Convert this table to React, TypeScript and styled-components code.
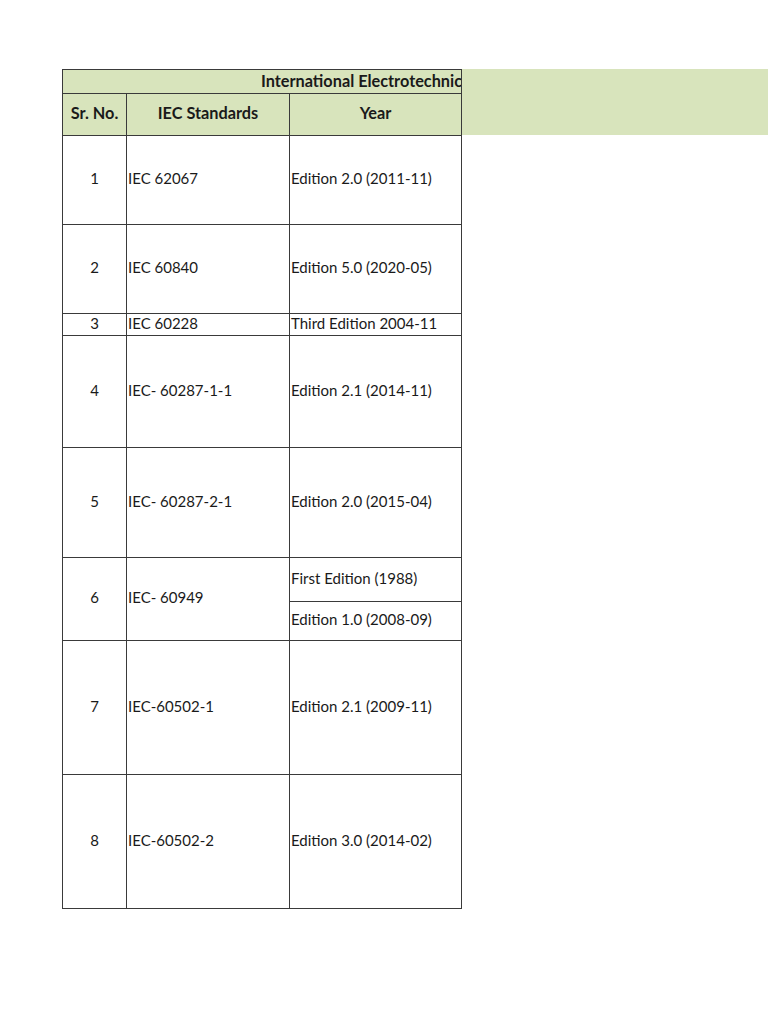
import React from 'react';
import styled, { createGlobalStyle } from 'styled-components';

const GlobalStyle = createGlobalStyle`
  html, body {
    margin: 0;
    padding: 0;
    background: #ffffff;
  }
  body {
    font-family: Lato, "Liberation Sans", sans-serif;
    font-size: 15px;
    color: #1a1a1a;
  }
`

const GREEN = '#d8e4bc'
const LINE = '#3a3a3a'

const Page = styled.div`
  padding: 69px 0 0 62px;
`

const HeadBand = styled.div`
  display: flex;
  align-items: flex-start;
`

const Filler = styled.div`
  flex: 1;
  height: 66px;
  background: ${GREEN};
`

const Grid = styled.div<{ $rows: string }>`
  display: grid;
  grid-template-columns: 64px 163px 172px;
  grid-template-rows: ${p => p.$rows};
  width: 400px;
  box-sizing: border-box;
  border-left: 1px solid ${LINE};
`

const TitleCell = styled.div`
  grid-column: 1 / span 3;
  background: ${GREEN};
  border-top: 1px solid ${LINE};
  border-bottom: 1px solid ${LINE};
  border-right: 1px solid ${LINE};
  overflow: hidden;
  white-space: nowrap;
  font-weight: 700;
  font-size: 16.3px;
  padding: 0 0 3px 198px;
  display: flex;
  align-items: center;
`

const Cell = styled.div<{ $align?: 'center' | 'left'; $head?: boolean; $span?: number }>`
  display: flex;
  align-items: center;
  justify-content: ${p => (p.$align === 'center' ? 'center' : 'flex-start')};
  padding: 0 0 4px ${p => (p.$align === 'center' ? '0' : '1px')};
  border-right: 1px solid ${LINE};
  border-bottom: 1px solid ${LINE};
  background: ${p => (p.$head ? GREEN : '#ffffff')};
  font-weight: ${p => (p.$head ? 700 : 400)};
  font-size: ${p => (p.$head ? '16.3px' : '15px')};
  white-space: nowrap;
  overflow: hidden;
  ${p => (p.$span ? `grid-row: span ${p.$span};` : '')}
`

interface Standard {
  no: number
  code: string
  years: string[]
  heights: number[]
}

const standards: Standard[] = [
  { no: 1, code: 'IEC 62067', years: ['Edition 2.0 (2011-11)'], heights: [89] },
  { no: 2, code: 'IEC 60840', years: ['Edition 5.0 (2020-05)'], heights: [89] },
  { no: 3, code: 'IEC 60228', years: ['Third Edition 2004-11'], heights: [22] },
  { no: 4, code: 'IEC- 60287-1-1', years: ['Edition 2.1 (2014-11)'], heights: [112] },
  { no: 5, code: 'IEC- 60287-2-1', years: ['Edition 2.0 (2015-04)'], heights: [110] },
  { no: 6, code: 'IEC- 60949', years: ['First Edition (1988)', 'Edition 1.0 (2008-09)'], heights: [44, 39] },
  { no: 7, code: 'IEC-60502-1', years: ['Edition 2.1 (2009-11)'], heights: [134] },
  { no: 8, code: 'IEC-60502-2', years: ['Edition 3.0 (2014-02)'], heights: [134] },
]

const App = () => {
  const bodyRows = standards.flatMap(s => s.heights).map(h => `${h}px`).join(' ')

  return (
    <>
      <GlobalStyle />
      <Page>
        <HeadBand>
          <Grid $rows="25px 42px">
            <TitleCell>International Electrotechnical Commission (IEC)</TitleCell>
            <Cell $align='center' $head>Sr. No.</Cell>
            <Cell $align='center' $head>IEC Standards</Cell>
            <Cell $align='center' $head>Year</Cell>
          </Grid>
          <Filler />
        </HeadBand>
        <Grid $rows={bodyRows}>
          {standards.map(s => (
            <React.Fragment key={s.no}>
              <Cell $align='center' $span={s.years.length}>{s.no}</Cell>
              <Cell $span={s.years.length}>{s.code}</Cell>
              {s.years.map(y => <Cell key={y}>{y}</Cell>)}
            </React.Fragment>
          ))}
        </Grid>
      </Page>
    </>
  );
};

export default App;
